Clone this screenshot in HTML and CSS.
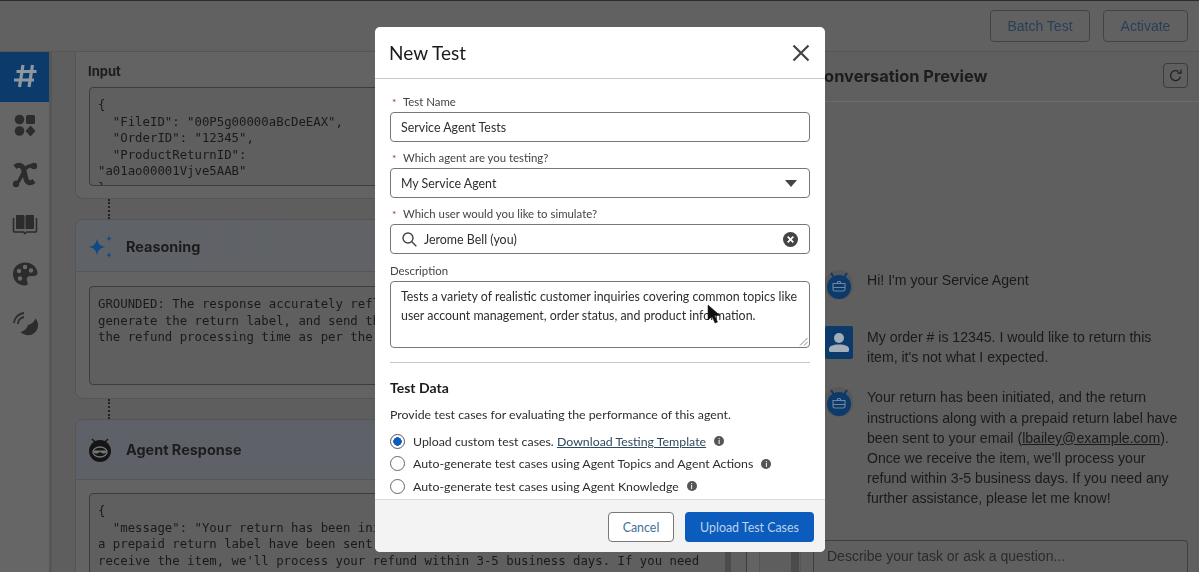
FILE: index.html
```html
<!DOCTYPE html>
<html lang="en">
<head>
<meta charset="utf-8">
<title>New Test</title>
<link rel="stylesheet" href="styles.css">
</head>
<body>
<div class="page">
  <header class="topbar">
    <button class="btn-outline btn-batch">Batch Test</button>
    <button class="btn-outline btn-activate">Activate</button>
  </header>
  <div class="workspace">
    <nav class="rail">
      <div class="rail-item active">
        <svg width="26" height="26" viewBox="0 0 26 26"><path d="M11 2 7.500 24M20.500 2 17 24M4.500 8.500h20M2 17h20" fill="none" stroke="#8d97a2" stroke-width="3.200"/></svg>
      </div>
      <div class="rail-item">
        <svg width="24" height="24" viewBox="0 0 24 24" fill="#2c2c2c"><circle cx="6.500" cy="6.500" r="4.800"/><rect x="13" y="2" width="9" height="9" rx="1.500"/><circle cx="6.500" cy="18" r="4.800"/><path d="m17.500 12.500 5 5.500-5 5.500-5-5.500z"/></svg>
      </div>
      <div class="rail-item">
        <svg width="26" height="28" viewBox="0 0 26 28" fill="none" stroke="#2c2c2c"><path d="M3 6c4-3 8-2 9 4l2 8c1 4 4 5 8 2" stroke-width="5"/><path d="M21 5c-5-1-8 2-10 7l-3 6c-1 3-3 4-5 3" stroke-width="3.400"/><circle cx="4" cy="23" r="3.200" fill="#2c2c2c" stroke="none"/><circle cx="22" cy="5" r="3.200" fill="#2c2c2c" stroke="none"/></svg>
      </div>
      <div class="rail-item">
        <svg width="26" height="24" viewBox="0 0 26 24" fill="#2c2c2c"><path d="M4 3h7c1 0 1.500.5 1.500 1.500V17H5c-1 0-1-.5-1-1zM22 3h-7c-1 0-1.500.5-1.500 1.500V17H21c1 0 1-.5 1-1z"/><path d="M1.500 6v13c0 .7.500 1 1 1h9l1.500 1.500 1.500-1.500h9c.5 0 1-.3 1-1V6" fill="none" stroke="#2c2c2c" stroke-width="1.600"/></svg>
      </div>
      <div class="rail-item">
        <svg width="26" height="26" viewBox="0 0 26 26"><path d="M13 1.500C6 1.500 1 6.500 1 13s5 11.500 11.500 11.500c3 0 4-1.500 3-3.500-1.500-3-.5-6 3-6h3c2.500 0 4-1 4-3C25 6 20 1.500 13 1.500z" fill="#2c2c2c"/><g fill="#6a6a6a"><circle cx="7" cy="10" r="2.200"/><circle cx="13" cy="6" r="2.200"/><circle cx="19" cy="9.500" r="2.200"/><circle cx="8" cy="17.500" r="2.200"/></g></svg>
      </div>
      <div class="rail-item">
        <svg width="26" height="26" viewBox="0 0 26 26" fill="none"><path d="M2 13A11 11 0 0 1 12 3M6 14a7 7 0 0 1 6-7" stroke="#2c2c2c" stroke-width="1.800"/><path d="M23.500 8.500A9.800 9.800 0 1 1 8.500 22c4-1 6.500-3.500 7.500-7 3-.5 6-3 7.500-6.500z" fill="#2c2c2c"/></svg>
      </div>
    </nav>
    <main class="canvas">
      <section class="card card-input">
        <h3 class="input-title">Input</h3>
        <pre class="code code-input">{
  "FileID": "00P5g00000aBcDeEAX",
  "OrderID": "12345",
  "ProductReturnID":
"a01ao00001Vjve5AAB"
}</pre>
      </section>
      <div class="link"></div>
      <section class="card">
        <div class="card-head head-reasoning">
          <svg width="24" height="24" viewBox="0 0 24 24" fill="#0f4a85"><path d="M9 3.500c1 5.500 3 7.500 8 8.500-5 1-7 3-8 8.500C8 15 6 13 1 12c5-1 7-3 8-8.500zM21 .5c.4 2 1 2.700 3 3-2 .4-2.600 1-3 3-.4-2-1-2.600-3-3 2-.3 2.600-1 3-3zM21 17c.4 2 1 2.700 3 3-2 .4-2.600 1-3 3-.4-2-1-2.600-3-3 2-.3 2.600-1 3-3z"/></svg>
          <h2 class="card-title">Reasoning</h2>
        </div>
        <div class="card-body">
          <pre class="code code-reason">GROUNDED: The response accurately reflects the return request details and the steps to
generate the return label, and send the instructions to the customer, including
the refund processing time as per the policy.</pre>
        </div>
      </section>
      <div class="link"></div>
      <section class="card">
        <div class="card-head head-agent">
          <svg width="24" height="24" viewBox="0 0 24 24"><path d="M4 1 8 5M20 1l-4 4" stroke="#151515" stroke-width="1.500"/><circle cx="12" cy="13" r="11" fill="#151515"/><ellipse cx="12" cy="14" rx="7" ry="5" fill="none" stroke="#777" stroke-width="1.400"/><path d="M6 12.500h12v1.500c0 1.500-3 2-4 1l-2-1-2 1c-1 1-4 .5-4-1z" fill="#777"/></svg>
          <h2 class="card-title">Agent Response</h2>
        </div>
        <div class="card-body card-body-agent">
          <pre class="code code-agent">{
  "message": "Your return has been initiated, and the return instructions along
a prepaid return label have been sent to your email. Once we
receive the item, we'll process your refund within 3-5 business days. If you need</pre>
          <span class="thumb thumb-code"></span>
        </div>
      </section>
      <span class="thumb thumb-canvas"></span>
    </main>
    <aside class="preview">
      <div class="preview-head">
        <h2 class="preview-title">Conversation Preview</h2>
        <span class="refresh">
          <svg width="15" height="15" viewBox="0 0 15 15" fill="none" stroke="#222" stroke-width="1.300"><path d="M12.500 8.500A5 5 0 1 1 10.500 3.500"/><path d="M13 1.500v3.500H9.500"/></svg>
        </span>
      </div>
      <div class="thread">
        <div class="msg msg-first">
          <svg class="avatar" width="28" height="30" viewBox="0 0 28 30"><circle cx="14" cy="15" r="15" fill="#585858"/><path d="M6 3l4 6M22 3l-4 6" stroke="#0c3a6b" stroke-width="2"/><circle cx="14" cy="17" r="12" fill="#0c3a6b"/><path d="M8 13.500h12v6c0 1-1 1.500-2 1.500H10c-1 0-2-.5-2-1.500zM8 17.500h12M12 13.500l1-2h2l1 2" fill="none" stroke="#6f87a0" stroke-width="1.100"/></svg>
          <p>Hi! I'm your Service Agent</p>
        </div>
        <div class="msg msg-second">
          <span class="user-avatar">
            <svg width="20" height="22" viewBox="0 0 20 22" fill="#a3aeb9"><circle cx="10" cy="6" r="5"/><path d="M0 17c0-3 4-4.500 10-4.500S20 14 20 17v1.500c0 1-1 1.500-2 1.500H2c-1 0-2-.5-2-1.500z"/></svg>
          </span>
          <p>My order # is 12345. I would like to return this item, it's not what I expected.</p>
        </div>
        <div class="msg msg-third">
          <svg class="avatar" width="28" height="30" viewBox="0 0 28 30"><circle cx="14" cy="15" r="15" fill="#585858"/><path d="M6 3l4 6M22 3l-4 6" stroke="#0c3a6b" stroke-width="2"/><circle cx="14" cy="17" r="12" fill="#0c3a6b"/><path d="M8 13.500h12v6c0 1-1 1.500-2 1.500H10c-1 0-2-.5-2-1.500zM8 17.500h12M12 13.500l1-2h2l1 2" fill="none" stroke="#6f87a0" stroke-width="1.100"/></svg>
          <p>Your return has been initiated, and the return instructions along with a prepaid return label have been sent to your email (<span class="mail">lbailey@example.com</span>). Once we receive the item, we'll process your refund within 3-5 business days. If you need any further assistance, please let me know!</p>
        </div>
      </div>
      <div class="composer">Describe your task or ask a question...</div>
    </aside>
  </div>

  <div class="modal">
    <div class="modal-head">
      <h1 class="modal-title">New Test</h1>
      <svg class="close" width="18" height="18" viewBox="0 0 18 18"><path d="M1.500 1.500 16.500 16.500M16.500 1.500 1.500 16.500" stroke="#444" stroke-width="2.200"/></svg>
    </div>
    <div class="modal-body">
      <label class="label"><span class="req">*</span>Test Name</label>
      <div class="field">Service Agent Tests</div>
      <label class="label"><span class="req">*</span>Which agent are you testing?</label>
      <div class="field field-select">My Service Agent
        <svg width="12" height="7" viewBox="0 0 12 7"><path d="M0 0h12L6 7z" fill="#444"/></svg>
      </div>
      <label class="label"><span class="req">*</span>Which user would you like to simulate?</label>
      <div class="field field-search">
        <svg width="15" height="15" viewBox="0 0 15 15" fill="none" stroke="#444" stroke-width="1.400"><circle cx="6" cy="6" r="5"/><path d="m9.800 9.800 4.500 4.500"/></svg>
        <span class="grow">Jerome Bell (you)</span>
        <svg width="15" height="15" viewBox="0 0 15 15"><circle cx="7.500" cy="7.500" r="7.500" fill="#444"/><path d="m4.700 4.700 5.600 5.600m0-5.600-5.600 5.600" stroke="#fff" stroke-width="1.800"/></svg>
      </div>
      <label class="label label-desc">Description</label>
      <div class="textarea">Tests a variety of realistic customer inquiries covering common topics like user account management, order status, and product information.
        <svg class="grip" width="9" height="9" viewBox="0 0 9 9"><path d="M1 8.500 8.500 1M5 8.500 8.500 5" stroke="#777" stroke-width=".9"/></svg>
      </div>
      <hr class="rule">
      <h2 class="section">Test Data</h2>
      <p class="help">Provide test cases for evaluating the performance of this agent.</p>
      <div class="radio-row radio-first"><span class="radio on"></span><span>Upload custom test cases. <a class="tmpl">Download Testing Template</a></span><span class="info">i</span></div>
      <div class="radio-row"><span class="radio"></span><span>Auto-generate test cases using Agent Topics and Agent Actions</span><span class="info">i</span></div>
      <div class="radio-row"><span class="radio"></span><span>Auto-generate test cases using Agent Knowledge</span><span class="info">i</span></div>
    </div>
    <div class="modal-foot">
      <button class="btn-cancel">Cancel</button>
      <button class="btn-primary">Upload Test Cases</button>
    </div>
  </div>
  <svg class="pointer" width="14" height="22" viewBox="0 0 14 22"><path d="M1 1v15l4-3.500 3 6.500 2.500-1-3-6.500H13z" fill="#111" stroke="#111" stroke-width=".5"/></svg>
</div>
</body>
</html>
```

FILE: styles.css
```css
* { box-sizing: border-box; }
html, body { margin: 0; height: 100%; }
body { overflow: hidden; background: #5f5f5f; font-family: "Liberation Sans", Arial, sans-serif; }
h1, h2, h3, p, pre { margin: 0; }
button { font: inherit; padding: 0; }

.page { position: relative; width: 1199px; height: 572px; overflow: hidden; display: flex; flex-direction: column; }

.topbar { flex: none; height: 52px; display: flex; justify-content: flex-end; align-items: flex-start; gap: 13px; padding: 10px 11px 0 0; background: #616161; border-top: 1px solid #2c2c2c; border-bottom: 1px solid #555; filter: blur(.35px); }
.btn-outline { height: 32px; margin-top: -1px; background: transparent; border: 1px solid #404448; border-radius: 4px; color: #2a3f57; font-size: 14px; }
.btn-batch { width: 100px; }
.btn-activate { width: 85px; }

.workspace { flex: 1; min-height: 0; display: flex; filter: blur(.35px); }

.rail { flex: none; width: 52px; background: #666; border-right: 3px solid #565656; display: flex; flex-direction: column; }
.rail-item { height: 49.500px; display: flex; align-items: center; justify-content: center; padding-bottom: 2px; }
.rail-item.active { background: #0c3a6b; }

.canvas { position: relative; flex: none; width: 748px; padding: 0 40px 0 23px; background: #5e5e5e; overflow: hidden; }
.card { background: #636363; border: 1px solid #555; border-radius: 8px; overflow: hidden; }
.card-input { height: 147px; border-top: 0; border-radius: 0 0 8px 8px; padding: 11px 12px 0; }
.input-title { font: bold 13px/16px "Inter", sans-serif; color: #1c1c1c; margin-bottom: 8px; }
.code { font: 12.340px/16.500px "DejaVu Sans Mono", monospace; color: #1a1a1a; margin-left: 1px; border: 1px solid #3d3d3d; border-radius: 4px; padding: 9px 8px 8px; background: #5f5f5f; overflow: hidden; white-space: pre; }
.code-input { height: 99px; }
.code-reason { height: 99px; }
.code-agent { height: 100px; line-height: 16.700px; }
.link { height: 20px; width: 0; margin-left: 33px; border-left: 2px dotted #222; }
.card-head { display: flex; align-items: center; gap: 14px; padding: 2px 12px 0; border-bottom: 1px solid #565656; background: linear-gradient(90deg, #5f6267, #616366 60%, #636363); }
.head-reasoning { height: 52px; }
.head-agent { height: 60px; padding-top: 1px; background: #5e6168; }
.card-title { font: bold 14.450px/20px "Inter", sans-serif; color: #1c1c1c; }
.card-body { padding: 14px 12px 13px; }
.card-body-agent { position: relative; padding-top: 13px; }
.thumb { position: absolute; background: #4c4c4c; border-radius: 3px; }
.thumb-code { left: 649px; top: 56px; width: 6px; height: 40px; }
.thumb-canvas { left: 739px; top: 490px; width: 8px; height: 40px; }

.preview { flex: 1; min-width: 0; display: flex; flex-direction: column; background: #5f5f5f; border-left: 1px solid #555; }
.preview-head { flex: none; height: 50px; display: flex; justify-content: space-between; align-items: center; padding: 0 11px 2px 11px; border-bottom: 1px solid #666d75; }
.preview-title { font: bold 16.400px/22px "Inter", sans-serif; color: #1c1c1c; white-space: nowrap; }
.refresh { width: 25px; height: 25px; border: 1px solid #3c3c3c; border-radius: 4px; display: flex; align-items: center; justify-content: center; }

.thread { flex: 1; padding: 168px 19px 0 24px; font-size: 14.100px; line-height: 20.200px; color: #1a1a1a; }
.msg { display: flex; gap: 14px; }
.msg p { flex: 1; }
.avatar { flex: none; }
.msg-second { margin-top: 26px; }
.msg-second p { padding-top: 1px; }
.msg-third { margin-top: 20px; }
.user-avatar { flex: none; width: 28px; height: 33px; border-radius: 2px; background: #0c3a6b; display: flex; align-items: center; justify-content: center; }
.mail { text-decoration: underline; }
.composer { flex: none; height: 32px; margin: 0 11px 0 12px; padding: 6px 13px; border: 1px solid #3f3f3f; border-bottom: 0; border-radius: 4px 4px 0 0; font-size: 14px; line-height: 18px; color: #2b2b2b; }

.modal { position: absolute; left: 375px; top: 27px; width: 450px; height: 525px; background: #fff; border-radius: 5px; display: flex; flex-direction: column; overflow: hidden; font-family: "Lato", "Noto Sans", sans-serif; color: #2e2e2e; filter: blur(.25px); }
.modal-head { flex: none; height: 52px; display: flex; align-items: center; justify-content: space-between; padding: 0 15px 0 14px; border-bottom: 1px solid #c9c9c9; }
.modal-title { font-weight: 400; font-size: 19px; color: #1b1b1b; }
.modal-body { flex: 1; min-height: 0; overflow: hidden; padding: 15px 15px 0; }
.label { display: block; font-size: 11.400px; line-height: 16px; color: #444; }
.req { display: inline-block; width: 13px; padding-left: 2px; color: #8c2a3a; font-size: 10px; }
.field { height: 30px; margin: 2px 0 8px; padding: 0 10px; border: 1px solid #777; border-radius: 4px; font-size: 12.400px; display: flex; align-items: center; gap: 7px; color: #2e2e2e; }
.field-select { justify-content: space-between; padding-right: 12px; }
.field-search { padding-left: 11px; padding-right: 11px; }
.grow { flex: 1; }
.label-desc { margin-top: 9px; }
.textarea { position: relative; height: 67px; margin-top: 2px; padding: 5px 10px 0; border: 1px solid #777; border-radius: 4px; font-size: 12.400px; line-height: 19px; color: #2e2e2e; }
.grip { position: absolute; right: 1px; bottom: 1px; }
.rule { margin: 14px 0 0; border: 0; border-top: 1px solid #c9c9c9; }
.section { font-size: 14px; line-height: 18px; font-weight: 700; color: #1b1b1b; margin-top: 16px; }
.help { font-size: 12.350px; line-height: 18px; margin-top: 9px; color: #2e2e2e; }
.radio-row { display: flex; align-items: center; height: 22.500px; font-size: 12.350px; }
.radio-first { margin-top: 6px; }
.radio { flex: none; width: 15px; height: 15px; margin-right: 8px; border: 1px solid #666; border-radius: 50%; background: #fff; }
.radio.on { border-color: #555; background: radial-gradient(circle, #0b5cbd 0 4px, #fff 4.500px); }
.tmpl { text-decoration: underline; color: #2e4a5f; }
.info { flex: none; width: 10px; height: 10px; margin-left: 8px; border-radius: 50%; background: #555; color: #fff; font-size: 7px; line-height: 10px; text-align: center; font-weight: 700; }
.modal-foot { flex: none; height: 53px; display: flex; justify-content: flex-end; gap: 11px; padding: 12px 11px 0 0; background: #f3f3f3; border-top: 1px solid #dcdcdc; }
.btn-cancel { width: 66px; height: 30px; background: #fff; border: 1px solid #777; border-radius: 4px; color: #3f7099; font-size: 12.400px; }
.btn-primary { width: 129px; height: 30px; background: #0b5cbd; border: 0; border-radius: 4px; color: #bcd2ea; font-size: 12.400px; }

.pointer { position: absolute; left: 707px; top: 304px; }
```
